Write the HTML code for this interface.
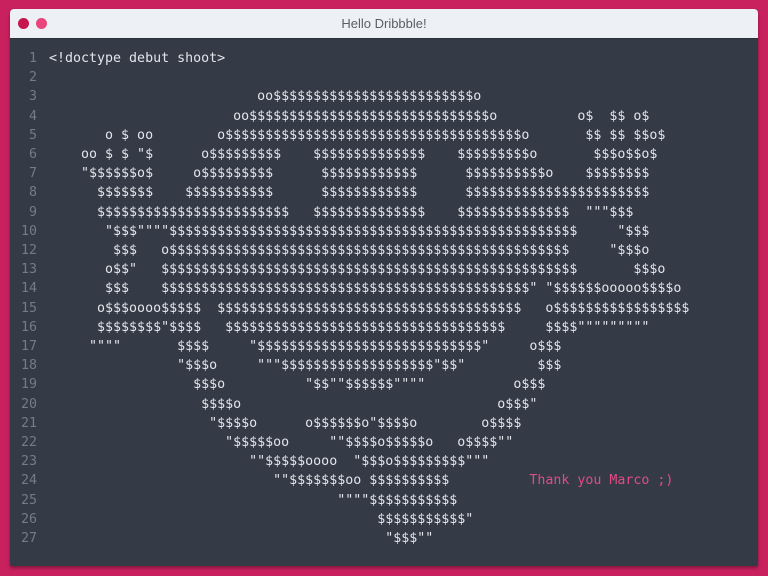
<!DOCTYPE html>
<html><head><meta charset="utf-8"><style>
html,body{margin:0;padding:0;}
body{width:768px;height:576px;background:#c8215e;position:relative;overflow:hidden;}
.win{position:absolute;left:10px;top:9px;width:748px;height:557px;background:#343a46;border-radius:4px 4px 2px 2px;box-shadow:0 2px 3px rgba(0,0,0,.35);overflow:hidden;}
.bar{position:absolute;left:0;top:0;width:748px;height:29px;background:#edf0f4;border-bottom:1px solid #2a2f38;}
.dot{position:absolute;top:9px;width:11px;height:11px;border-radius:50%;}
.title{position:absolute;left:0;right:0;top:7px;text-align:center;font:13px "Liberation Sans",sans-serif;color:#5b5e63;}
.nums{position:absolute;left:0;top:40px;width:27px;text-align:right;font:13.3px/19.2px "DejaVu Sans Mono",monospace;color:#767c86;margin:0;}
.code{position:absolute;left:39px;top:40px;font:13.3px/19.2px "DejaVu Sans Mono",monospace;color:#e2e5ea;margin:0;white-space:pre;}
.pk{color:#e04c86;}
</style></head><body>
<div class="win">
<div class="bar"><div class="dot" style="left:8px;background:#c7154e"></div><div class="dot" style="left:26px;background:#e8457d"></div><div class="title">Hello Dribbble!</div></div>
<pre class="nums">1
2
3
4
5
6
7
8
9
10
12
13
14
15
16
17
18
19
20
21
22
23
24
25
26
27</pre>
<pre class="code">&lt;!doctype debut shoot&gt;

                          oo$$$$$$$$$$$$$$$$$$$$$$$$$o
                       oo$$$$$$$$$$$$$$$$$$$$$$$$$$$$$$o          o$  $$ o$
       o $ oo        o$$$$$$$$$$$$$$$$$$$$$$$$$$$$$$$$$$$$$o       $$ $$ $$o$
    oo $ $ "$      o$$$$$$$$$    $$$$$$$$$$$$$$    $$$$$$$$$o       $$$o$$o$
    "$$$$$$o$     o$$$$$$$$$      $$$$$$$$$$$$      $$$$$$$$$$o    $$$$$$$$
      $$$$$$$    $$$$$$$$$$$      $$$$$$$$$$$$      $$$$$$$$$$$$$$$$$$$$$$$
      $$$$$$$$$$$$$$$$$$$$$$$$   $$$$$$$$$$$$$$    $$$$$$$$$$$$$$  """$$$
       "$$$""""$$$$$$$$$$$$$$$$$$$$$$$$$$$$$$$$$$$$$$$$$$$$$$$$$$$     "$$$
        $$$   o$$$$$$$$$$$$$$$$$$$$$$$$$$$$$$$$$$$$$$$$$$$$$$$$$$     "$$$o
       o$$"   $$$$$$$$$$$$$$$$$$$$$$$$$$$$$$$$$$$$$$$$$$$$$$$$$$$$       $$$o
       $$$    $$$$$$$$$$$$$$$$$$$$$$$$$$$$$$$$$$$$$$$$$$$$$$" "$$$$$$ooooo$$$$o
      o$$$oooo$$$$$  $$$$$$$$$$$$$$$$$$$$$$$$$$$$$$$$$$$$$$   o$$$$$$$$$$$$$$$$$
      $$$$$$$$"$$$$   $$$$$$$$$$$$$$$$$$$$$$$$$$$$$$$$$$$     $$$$"""""""""
     """"       $$$$     "$$$$$$$$$$$$$$$$$$$$$$$$$$$$"     o$$$
                "$$$o     """$$$$$$$$$$$$$$$$$$$"$$"         $$$
                  $$$o          "$$""$$$$$$""""           o$$$
                   $$$$o                                o$$$"
                    "$$$$o      o$$$$$$o"$$$$o        o$$$$
                      "$$$$$oo     ""$$$$o$$$$$o   o$$$$""
                         ""$$$$$oooo  "$$$o$$$$$$$$$"""
                            ""$$$$$$$oo $$$$$$$$$$          <span class="pk">Thank you Marco ;)</span>
                                    """"$$$$$$$$$$$
                                         $$$$$$$$$$$"
                                          "$$$""</pre>
</div>
</body></html>
